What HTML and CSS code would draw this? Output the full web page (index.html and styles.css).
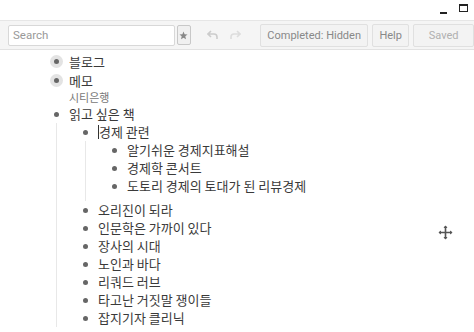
FILE: index.html
```html
<!DOCTYPE html>
<html>
<head>
<meta charset="utf-8">
<link rel="stylesheet" href="styles.css">
</head>
<body>
<div class="titlebar">
  <span class="win-min"></span>
  <span class="win-max"></span>
</div>
<div class="toolbar">
  <div class="search">Search</div>
  <div class="star">
    <svg width="9" height="9" viewBox="0 0 10 10"><path d="M5 0.5 L6.2 3.6 L9.5 3.8 L7 5.9 L7.8 9.2 L5 7.4 L2.2 9.2 L3 5.9 L0.5 3.8 L3.8 3.6 Z" fill="#888"/></svg>
  </div>
  <div class="undo">
    <svg width="12" height="10" viewBox="0 0 12 10"><path d="M4 1 L1 4 L4 7 M1.5 4 H7 Q10 4 10 7 V9" fill="none" stroke="#ccc" stroke-width="1.6"/></svg>
  </div>
  <div class="redo">
    <svg width="12" height="10" viewBox="0 0 12 10"><path d="M8 1 L11 4 L8 7 M10.5 4 H5 Q2 4 2 7 V9" fill="none" stroke="#ddd" stroke-width="1.6"/></svg>
  </div>
  <div class="btn btn-completed">Completed: Hidden</div>
  <div class="btn btn-help">Help</div>
  <div class="btn btn-saved">Saved</div>
</div>
<div class="content">
  <ul class="list level1">
    <li class="item">
      <div class="row"><span class="bullet halo"></span><span class="text">블로그</span></div>
    </li>
    <li class="item">
      <div class="row"><span class="bullet halo"></span><span class="text">메모</span></div>
      <div class="note">시티은행</div>
    </li>
    <li class="item has-children">
      <div class="row"><span class="bullet"></span><span class="text">읽고 싶은 책</span></div>
      <ul class="list children">
        <li class="item has-children">
          <div class="row"><span class="bullet"></span><span class="text"><span class="caret"></span>경제 관련</span></div>
          <ul class="list children">
            <li class="item"><div class="row"><span class="bullet"></span><span class="text">알기쉬운 경제지표해설</span></div></li>
            <li class="item"><div class="row"><span class="bullet"></span><span class="text">경제학 콘서트</span></div></li>
            <li class="item"><div class="row"><span class="bullet"></span><span class="text">도토리 경제의 토대가 된 리뷰경제</span></div></li>
          </ul>
        </li>
        <li class="item"><div class="row"><span class="bullet"></span><span class="text">오리진이 되라</span></div></li>
        <li class="item"><div class="row"><span class="bullet"></span><span class="text">인문학은 가까이 있다</span></div></li>
        <li class="item"><div class="row"><span class="bullet"></span><span class="text">장사의 시대</span></div></li>
        <li class="item"><div class="row"><span class="bullet"></span><span class="text">노인과 바다</span></div></li>
        <li class="item"><div class="row"><span class="bullet"></span><span class="text">리쿼드 러브</span></div></li>
        <li class="item"><div class="row"><span class="bullet"></span><span class="text">타고난 거짓말 쟁이들</span></div></li>
        <li class="item"><div class="row"><span class="bullet"></span><span class="text">잡지기자 클리닉</span></div></li>
      </ul>
    </li>
  </ul>
  <div class="move-cursor">
    <svg width="15" height="15" viewBox="0 0 15 15"><path d="M7.5 1 V14 M1 7.5 H14" stroke="#555" stroke-width="1.6"/><path d="M7.5 0.5 L5.5 3 H9.5 Z M7.5 14.5 L5.5 12 H9.5 Z M0.5 7.5 L3 5.5 V9.5 Z M14.5 7.5 L12 5.5 V9.5 Z" fill="#555"/></svg>
  </div>
</div>
</body>
</html>
```

FILE: styles.css
```css
html, body {
  margin: 0;
  padding: 0;
  background: #fff;
  width: 474px;
  height: 332px;
  overflow: hidden;
}
body {
  font-family: "Noto Sans CJK KR", "Noto Sans", sans-serif;
  color: #3a3a3a;
}
.titlebar {
  height: 20px;
  display: flex;
  justify-content: flex-end;
  align-items: center;
  gap: 12px;
  padding-right: 6px;
}
.win-min {
  width: 7px;
  height: 2px;
  background: #222;
  margin-top: 5px;
}
.win-max {
  width: 7px;
  height: 5px;
  border: 1px solid #222;
  border-top-width: 2px;
  margin-top: -4px;
}
.toolbar {
  height: 28px;
  background: #f5f5f5;
  border-top: 1px solid #e6e6e6;
  border-bottom: 1px solid #e2e2e2;
  display: flex;
  align-items: center;
  padding-left: 8px;
  font-family: "Roboto", "Liberation Sans", sans-serif;
  font-size: 11px;
}
.search {
  width: 164px;
  height: 19px;
  line-height: 19px;
  background: #fff;
  border: 1px solid #d8d8d8;
  border-radius: 2px;
  padding-left: 4px;
  color: #999;
  font-size: 11.5px;
}
.search + .star {
  margin-left: 2px;
}
.star {
  width: 13px;
  height: 18px;
  border: 1px solid #c8c8c8;
  border-radius: 2px;
  background: #f0f0f0;
  display: flex;
  align-items: center;
  justify-content: center;
}
.undo {
  margin-left: 16px;
  display: flex;
}
.redo {
  margin-left: 10px;
  display: flex;
}
.btn {
  height: 23px;
  line-height: 21px;
  border: 1px solid #e0e0e0;
  border-radius: 2px;
  background: #f3f3f3;
  color: #888;
  text-align: center;
  box-sizing: border-box;
}
.btn-completed {
  margin-left: 19px;
  width: 110px;
}
.btn-help {
  margin-left: 4px;
  width: 38px;
}
.btn-saved {
  margin-left: 4px;
  width: 62px;
  color: #b0b0b0;
}
.content {
  position: relative;
  padding-top: 2px;
}
.list {
  list-style: none;
  margin: 0;
  padding: 0;
}
.level1 {
  padding-left: 50px;
}
.children {
  padding-left: 29px;
  position: relative;
}
.item {
  position: relative;
}
.has-children > .children::before {
  content: "";
  position: absolute;
  left: 6px;
  top: 0;
  bottom: 0;
  border-left: 1px solid #e8e8e8;
}
.has-children .has-children > .children {
  padding-bottom: 6px;
}
.row {
  display: flex;
  align-items: center;
  height: 18px;
  font-size: 13px;
}
.level1 > .item:nth-child(-n+2) > .row {
  height: 19px;
}
.bullet {
  width: 13px;
  height: 13px;
  border-radius: 50%;
  position: relative;
  flex: none;
}
.bullet::after {
  content: "";
  position: absolute;
  left: 4px;
  top: 4px;
  width: 5px;
  height: 5px;
  border-radius: 50%;
  background: #666;
}
.bullet.halo {
  background: #e3e3e3;
}
.text {
  margin-left: 6px;
  line-height: 18px;
  white-space: nowrap;
}
.caret {
  display: inline-block;
  width: 1px;
  height: 14px;
  background: #333;
  vertical-align: -2px;
}
.note {
  font-size: 11px;
  color: #777;
  padding-left: 19px;
  line-height: 14px;
  margin-bottom: 1px;
}
.move-cursor {
  position: absolute;
  left: 438px;
  top: 171px;
}
```
